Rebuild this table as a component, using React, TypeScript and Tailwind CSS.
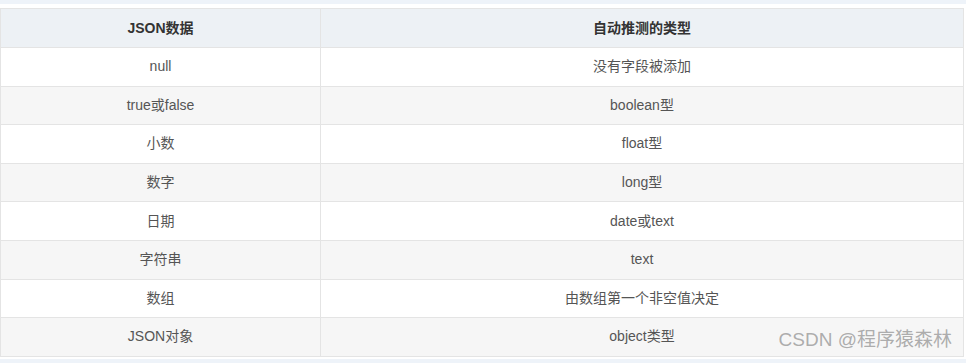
import React from "react";

const rows = [
  ["null", "没有字段被添加"],
  ["true或false", "boolean型"],
  ["小数", "float型"],
  ["数字", "long型"],
  ["日期", "date或text"],
  ["字符串", "text"],
  ["数组", "由数组第一个非空值决定"],
  ["JSON对象", "object类型"],
];

const App = () => {
  return (
    <div
      className="relative w-[966px] h-[363px] bg-white overflow-hidden"
      style={{ fontFamily: '"Liberation Sans", "Noto Sans CJK SC", sans-serif' }}
    >
      <div className="h-[4px] bg-[#eef3f9]" />
      <div className="h-[4px]" />
      <table className="w-[964px] border-collapse text-[14px] border border-[#e4e4e4]">
        <thead>
          <tr className="h-[39px] bg-[#edf1f5]">
            <th className="w-[320px] border border-[#e4e4e4] font-bold text-[#333]">
              JSON数据
            </th>
            <th className="border border-[#e4e4e4] font-bold text-[#333]">
              自动推测的类型
            </th>
          </tr>
        </thead>
        <tbody>
          {rows.map((r, i) => (
            <tr
              key={i}
              className={`h-[38.6px] ${i % 2 === 1 ? "bg-[#f6f6f6]" : "bg-white"}`}
            >
              <td className="border border-[#e4e4e4] text-center text-[#555]">{r[0]}</td>
              <td className="border border-[#e4e4e4] text-center text-[#555]">{r[1]}</td>
            </tr>
          ))}
        </tbody>
      </table>
      <div className="h-[4px] mt-[2px] bg-[#eef3f9]" />
      <div className="absolute right-[14px] top-[330px] text-[19px] text-[#999]/80 leading-none">
        CSDN @程序猿森林
      </div>
    </div>
  );
};

export default App;
